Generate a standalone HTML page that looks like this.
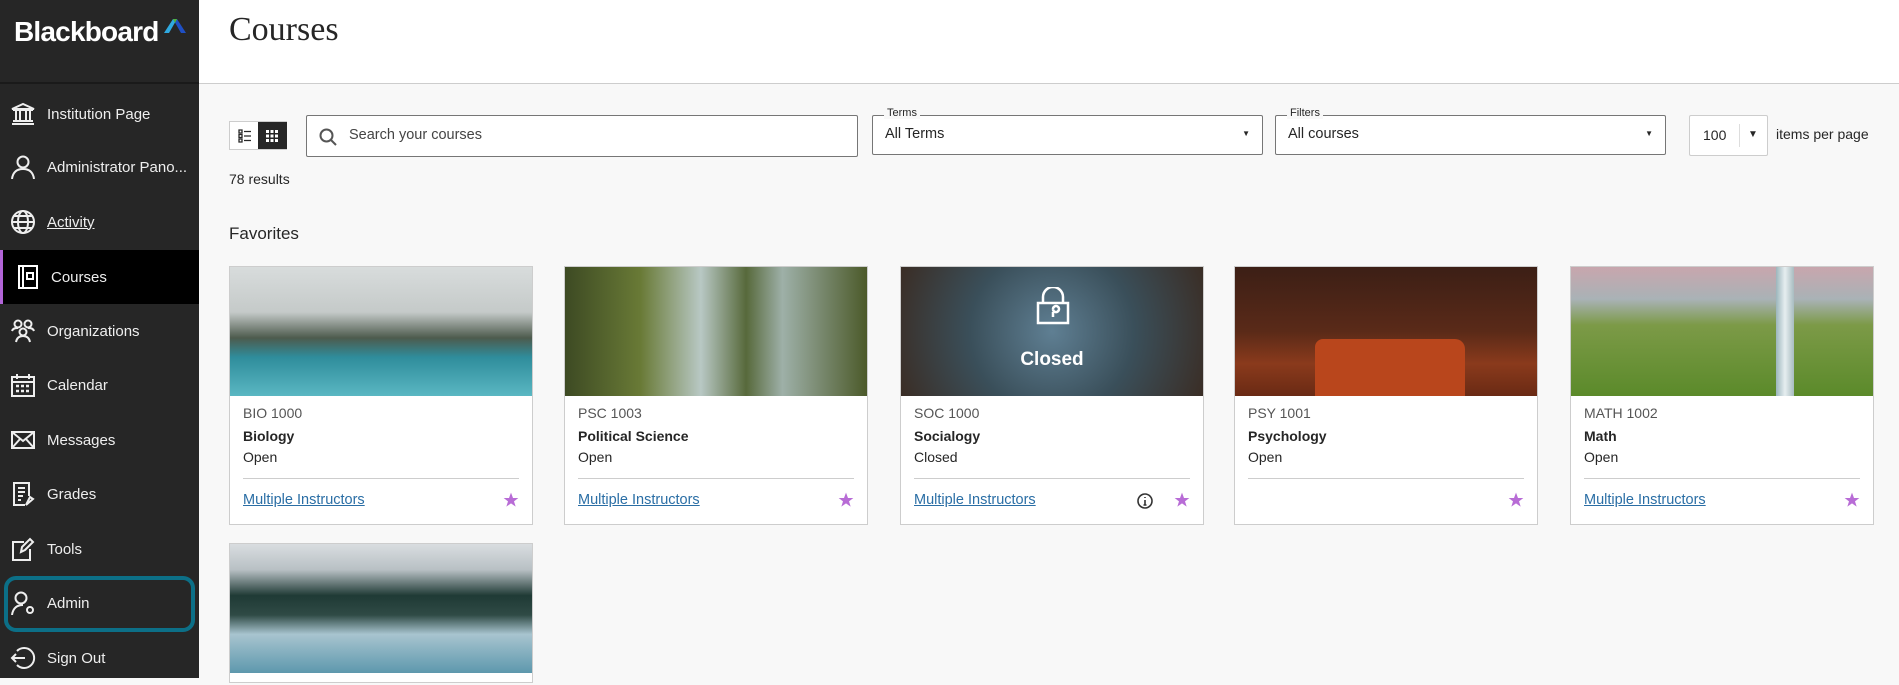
<!DOCTYPE html>
<html><head><meta charset="utf-8"><style>
*{box-sizing:border-box;margin:0;padding:0}
body{width:1899px;height:678px;overflow:hidden;background:#f8f8f8;font-family:"Liberation Sans",sans-serif;color:#262626;position:relative}
#side{position:absolute;left:0;top:0;width:199px;height:678px;background:#262626;color:#eee}
#logo{position:absolute;left:14px;top:16px;font-size:28px;font-weight:bold;color:#fff;letter-spacing:-0.8px}
#logo svg{position:absolute;left:150px;top:3px}
#sep{position:absolute;left:0;top:82px;width:199px;height:2px;background:#1a1a1a}
.nav{position:absolute;left:0;width:199px;height:54px;font-size:15px;display:flex;align-items:center}
.nav svg{position:absolute;left:10px;top:15px}
.nav span{position:absolute;left:47px}
.act{background:#000;border-left:3px solid #b265d8}
#focus{position:absolute;left:4px;top:576px;width:191px;height:56px;border:4px solid #0c6f87;border-radius:12px}
#hdr{position:absolute;left:199px;top:0;right:0;height:84px;background:#fff;border-bottom:1px solid #cdcdcd}
#hdr h1{position:absolute;left:30px;top:11px;font-family:"Liberation Serif",serif;font-weight:normal;font-size:34px;color:#262626}
.box{position:absolute;background:#fff;border:1px solid #767676;border-radius:2px;font-size:14.5px}
.lab{position:absolute;top:-9px;left:11px;background:#f8f8f8;font-size:11px;padding:0 3px;color:#262626}
.card{position:absolute;width:304px;background:#fff;border:1px solid #cdcdcd}
.img{height:129px;position:relative;overflow:hidden}
.code{position:absolute;left:13px;top:138px;font-size:14px;color:#555}
.name{position:absolute;left:13px;top:161px;font-size:14px;font-weight:bold}
.st{position:absolute;left:13px;top:182px;font-size:14px}
.div{position:absolute;left:13px;right:13px;top:211px;border-top:1px solid #cdcdcd}
.lnk{position:absolute;left:13px;top:225px;font-size:14.5px;color:#2a6ea5;text-decoration:underline}
.star{position:absolute;right:13px;top:225px}
</style></head><body>
<div id="side">
<div id="logo">Blackboard<svg width="22" height="14" viewBox="0 0 22 14"><path d="M0 14L9 0L13 0L5 14Z" fill="#2fa9e0"/><path d="M9 0L13 0L22 14L17 14Z" fill="#1f4fc4"/><path d="M9 0L13 0L11 4Z" fill="#52b43a"/></svg></div>
<div id="sep"></div>
<div class="nav" style="top:87px"><svg width="26" height="24" viewBox="0 0 26 24" fill="none" stroke="#eee" stroke-width="2"><path d="M2 7L13 2L24 7Z M3 8H23 M6 9V18 M10 9V18 M16 9V18 M20 9V18 M3 19H23 M2 22H24"/></svg><span>Institution Page</span></div>
<div class="nav" style="top:140px"><svg width="26" height="24" viewBox="0 0 26 24" fill="none" stroke="#eee" stroke-width="2"><circle cx="13" cy="7" r="5.5"/><path d="M2 24C3 16 8 14 13 14C18 14 23 16 24 24"/></svg><span>Administrator Pano...</span></div>
<div class="nav" style="top:195px"><svg width="26" height="24" viewBox="0 0 26 24" fill="none" stroke="#eee" stroke-width="2"><circle cx="13" cy="12" r="11"/><ellipse cx="13" cy="12" rx="5" ry="11"/><path d="M2 12H24M4 6H22M4 18H22"/></svg><span style="text-decoration:underline">Activity</span></div>
<div class="nav act" style="top:250px"><svg width="26" height="24" viewBox="0 0 26 24" fill="none" stroke="#fff" stroke-width="2" style="left:12px"><path d="M4 1H22V23H4Z M8 1V23 M12 8H18V14H12Z"/></svg><span style="left:48px">Courses</span></div>
<div class="nav" style="top:304px"><svg width="26" height="24" viewBox="0 0 26 24" fill="none" stroke="#eee" stroke-width="2"><circle cx="8" cy="5" r="3.5"/><circle cx="18" cy="5" r="3.5"/><circle cx="13" cy="13" r="3.5"/><path d="M2 12C3 9 6 9 8 9M24 12C23 9 20 9 18 9M6 23C7 18 10 17 13 17C16 17 19 18 20 23"/></svg><span>Organizations</span></div>
<div class="nav" style="top:358px"><svg width="26" height="24" viewBox="0 0 26 24" fill="none" stroke="#eee" stroke-width="2"><path d="M2 4H24V23H2Z M2 9H24 M7 1V6 M19 1V6"/><path d="M6 13h3M11 13h3M16 13h3M6 18h3M11 18h3M16 18h3" stroke-width="2.5"/></svg><span>Calendar</span></div>
<div class="nav" style="top:413px"><svg width="26" height="24" viewBox="0 0 26 24" fill="none" stroke="#eee" stroke-width="2"><path d="M2 4H24V20H2Z M2 4L13 13L24 4 M2 20L10 11 M24 20L16 11"/></svg><span>Messages</span></div>
<div class="nav" style="top:467px"><svg width="26" height="24" viewBox="0 0 26 24" fill="none" stroke="#eee" stroke-width="2"><path d="M19 14V1H4V23H15 M8 6H15M8 10H15M8 14H13M8 18H11 M16 23L20 15L23 17Z"/></svg><span>Grades</span></div>
<div class="nav" style="top:522px"><svg width="26" height="24" viewBox="0 0 26 24" fill="none" stroke="#eee" stroke-width="2"><path d="M14 5H3V23H20V12 M11 15L12 10L20 2L23 5L15 13Z"/></svg><span>Tools</span></div>
<div class="nav" style="top:576px"><svg width="26" height="24" viewBox="0 0 26 24" fill="none" stroke="#eee" stroke-width="2"><circle cx="11" cy="7" r="5.5"/><path d="M2 24C3 17 7 14 13 14"/><circle cx="20" cy="19" r="3"/></svg><span>Admin</span></div>
<div class="nav" style="top:631px"><svg width="26" height="24" viewBox="0 0 26 24" fill="none" stroke="#eee" stroke-width="2"><path d="M7 5A10 10 0 1 1 7 19 M2 12H15 M6 8L2 12L6 16"/></svg><span>Sign Out</span></div>
<div id="focus"></div>
</div>
<div id="hdr"><h1>Courses</h1></div>

<div style="position:absolute;left:229px;top:121px;width:58px;height:29px;border:1px solid #cdcdcd;background:#fff">
<svg width="14" height="14" viewBox="0 0 14 14" style="position:absolute;left:8px;top:7px" fill="none" stroke="#262626" stroke-width="1.3"><path d="M1 1h3v3h-3zM1 5.5h3v3h-3zM1 10h3v3h-3zM6 2.5h7M6 7h7M6 11.5h7"/></svg>
<div style="position:absolute;left:28px;top:0;width:29px;height:27px;background:#262626"><svg width="12" height="12" viewBox="0 0 12 12" style="position:absolute;left:8px;top:8px" fill="#fff"><path d="M0 0h3v3h-3zM4.5 0h3v3h-3zM9 0h3v3h-3zM0 4.5h3v3h-3zM4.5 4.5h3v3h-3zM9 4.5h3v3h-3zM0 9h3v3h-3zM4.5 9h3v3h-3zM9 9h3v3h-3z"/></svg></div></div>

<div class="box" style="left:306px;top:115px;width:552px;height:42px"><svg width="18" height="18" viewBox="0 0 18 18" style="position:absolute;left:12px;top:12px" fill="none" stroke="#555" stroke-width="2"><circle cx="7.5" cy="7.5" r="6"/><path d="M12 12L17 17"/></svg><span style="position:absolute;left:42px;top:11px;color:#444">Search your courses</span></div>
<div class="box" style="left:872px;top:115px;width:391px;height:40px"><div class="lab">Terms</div><span style="position:absolute;left:12px;top:10px">All Terms</span><span style="position:absolute;right:12px;top:13px;font-size:8px">▼</span></div>
<div class="box" style="left:1275px;top:115px;width:391px;height:40px"><div class="lab">Filters</div><span style="position:absolute;left:12px;top:10px">All courses</span><span style="position:absolute;right:12px;top:13px;font-size:8px">▼</span></div>
<div class="box" style="left:1689px;top:115px;width:79px;height:41px;border-color:#cdcdcd"><span style="position:absolute;left:13px;top:11px;font-size:14px">100</span><div style="position:absolute;left:49px;top:8px;height:23px;border-left:1px solid #ddd"></div><span style="position:absolute;left:58px;top:13px;font-size:10px">▼</span></div>
<span style="position:absolute;left:1776px;top:126px;font-size:14px">items per page</span>
<span style="position:absolute;left:229px;top:171px;font-size:14px">78 results</span>
<span style="position:absolute;left:229px;top:224px;font-size:17px">Favorites</span>

<div class="card" style="left:229px;top:266px;height:259px"><div class="img" style="background:linear-gradient(180deg,#d8dcdc 0%,#c5cac9 35%,#4d5b4d 55%,#2f8d9c 70%,#5ab7c2 100%)"></div><div class="code">BIO 1000</div><div class="name">Biology</div><div class="st">Open</div><div class="div"></div><div class="lnk">Multiple Instructors</div><svg class="star" width="16" height="16" viewBox="0 0 24 24"><path d="M12 1L15 9H23L16.5 14L19 22L12 17L5 22L7.5 14L1 9H9Z" fill="#b86cd6"/></svg></div>
<div class="card" style="left:564px;top:266px;height:259px"><div class="img" style="background:linear-gradient(90deg,#3d4a23 0%,#697a36 25%,#b8c8c4 45%,#57693b 60%,#9eb0a8 72%,#4c5a2a 100%)"></div><div class="code">PSC 1003</div><div class="name">Political Science</div><div class="st">Open</div><div class="div"></div><div class="lnk">Multiple Instructors</div><svg class="star" width="16" height="16" viewBox="0 0 24 24"><path d="M12 1L15 9H23L16.5 14L19 22L12 17L5 22L7.5 14L1 9H9Z" fill="#b86cd6"/></svg></div>
<div class="card" style="left:900px;top:266px;height:259px"><div class="img" style="background:radial-gradient(circle at 50% 50%,#5f7f93 0%,#3a4f5a 50%,#3a2d25 100%)"><svg width="34" height="38" viewBox="0 0 34 38" style="position:absolute;left:135px;top:20px" fill="none" stroke="#fff" stroke-width="2.5"><path d="M7 16V10A10 10 0 0 1 27 10V16 M2 16H32V36H2Z M17 22a3 3 0 1 1 0 .1 M17 25V30"/></svg><div style="position:absolute;left:0;right:0;top:82px;text-align:center;color:#fff;font-weight:bold;font-size:19px">Closed</div></div><div class="code">SOC 1000</div><div class="name">Socialogy</div><div class="st">Closed</div><div class="div"></div><div class="lnk">Multiple Instructors</div><svg style="position:absolute;right:50px;top:226px" width="16" height="16" viewBox="0 0 16 16" fill="none" stroke="#333" stroke-width="1.6"><circle cx="8" cy="8" r="7"/><path d="M8 7V12M6.5 12H9.5M8 4v1"/></svg><svg class="star" width="16" height="16" viewBox="0 0 24 24"><path d="M12 1L15 9H23L16.5 14L19 22L12 17L5 22L7.5 14L1 9H9Z" fill="#b86cd6"/></svg></div>
<div class="card" style="left:1234px;top:266px;height:259px"><div class="img" style="background:linear-gradient(180deg,#3c1f16 0%,#5a2a18 50%,#8a3a1c 75%,#6a2a14 100%)"><div style="position:absolute;left:80px;top:72px;width:150px;height:57px;background:#b9461c;border-radius:8px 10px 0 0"></div></div><div class="code">PSY 1001</div><div class="name">Psychology</div><div class="st">Open</div><div class="div"></div><svg class="star" width="16" height="16" viewBox="0 0 24 24"><path d="M12 1L15 9H23L16.5 14L19 22L12 17L5 22L7.5 14L1 9H9Z" fill="#b86cd6"/></svg></div>
<div class="card" style="left:1570px;top:266px;height:259px"><div class="img" style="background:linear-gradient(180deg,#c8a6ad 0%,#a9b2b6 25%,#7c9a47 45%,#5b8a2a 100%)"><div style="position:absolute;left:205px;top:0;width:18px;height:129px;background:linear-gradient(90deg,#9cb6bc,#e6eef0,#a8bcc0)"></div></div><div class="code">MATH 1002</div><div class="name">Math</div><div class="st">Open</div><div class="div"></div><div class="lnk">Multiple Instructors</div><svg class="star" width="16" height="16" viewBox="0 0 24 24"><path d="M12 1L15 9H23L16.5 14L19 22L12 17L5 22L7.5 14L1 9H9Z" fill="#b86cd6"/></svg></div>
<div class="card" style="left:229px;top:543px;height:140px"><div class="img" style="background:linear-gradient(180deg,#d9dde0 0%,#b8c0c4 20%,#1f3a35 40%,#2f4a45 55%,#a8c4cf 70%,#5d98ad 100%)"></div></div>
</body></html>
